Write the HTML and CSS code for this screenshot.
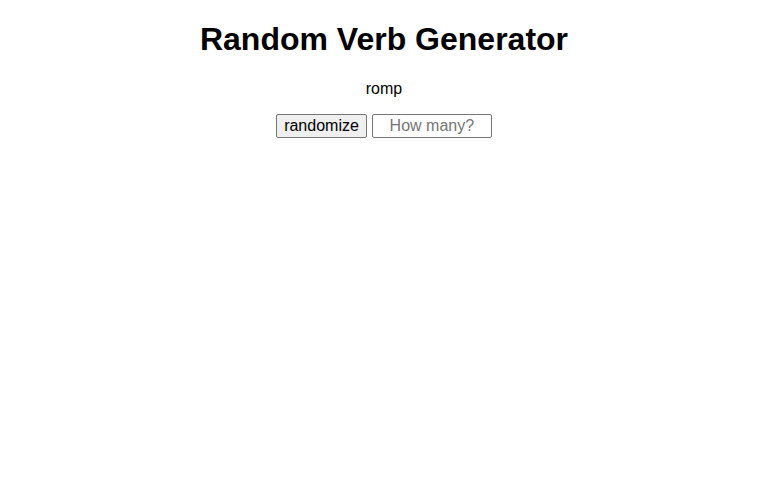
FILE: index.html
```html
<!DOCTYPE html>
<html lang="en">
<head>
<meta charset="utf-8">
<title>Random Verb Generator</title>
<link rel="stylesheet" href="styles.css">
</head>
<body>
<main class="app">
  <h1 class="title">Random Verb Generator</h1>
  <p class="verb">romp</p>
  <div class="controls">
    <button class="btn" type="button">randomize</button>
    <input class="count" type="text" placeholder="How many?">
  </div>
</main>
</body>
</html>
```

FILE: styles.css
```css
body {
  margin: 0 8px 8px;
  font-family: "Liberation Sans", Arial, sans-serif;
  color: #000;
  background: #fff;
}

.app {
  text-align: center;
}

.title {
  font-size: 32px;
  margin: 21px 0 22px;
}

.verb {
  font-size: 16px;
  margin: 16px 0;
}

.controls {
  display: flex;
  justify-content: center;
  gap: 5px;
}

.btn {
  font-family: "Liberation Sans", Arial, sans-serif;
  font-size: 16px;
  padding: 1px 7px;
  height: 24px;
  border: 1px solid #767676;
  border-radius: 2px;
  background: #efefef;
  color: #000;
}

.count {
  font-family: "Liberation Sans", Arial, sans-serif;
  font-size: 16px;
  width: 120px;
  height: 24px;
  box-sizing: border-box;
  padding: 1px 2px;
  border: 1px solid #767676;
  border-radius: 2px;
  text-align: center;
}

.count::placeholder {
  color: #757575;
}
```
